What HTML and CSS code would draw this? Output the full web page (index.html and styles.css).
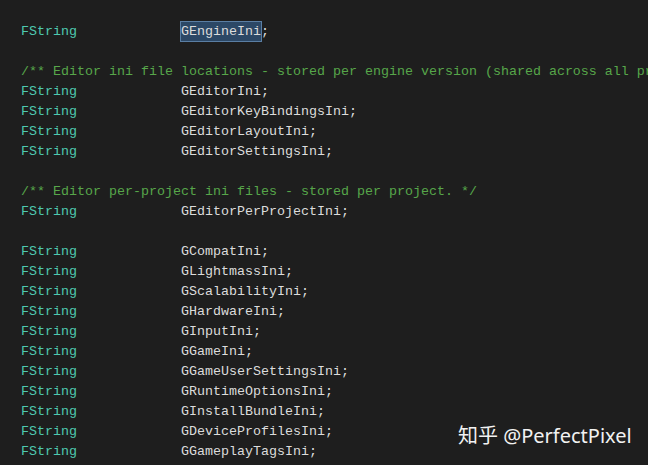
FILE: index.html
```html
<!DOCTYPE html>
<html>
<head>
<meta charset="utf-8">
<link rel="stylesheet" href="styles.css">
</head>
<body>
<div class="editor">
<div class="line"><span class="type">FString</span>             <span class="sel">GEngineIni</span>;</div>
<div class="line"> </div>
<div class="line cmt">/** Editor ini file locations - stored per engine version (shared across all pr</div>
<div class="line"><span class="type">FString</span>             GEditorIni;</div>
<div class="line"><span class="type">FString</span>             GEditorKeyBindingsIni;</div>
<div class="line"><span class="type">FString</span>             GEditorLayoutIni;</div>
<div class="line"><span class="type">FString</span>             GEditorSettingsIni;</div>
<div class="line"> </div>
<div class="line cmt">/** Editor per-project ini files - stored per project. */</div>
<div class="line"><span class="type">FString</span>             GEditorPerProjectIni;</div>
<div class="line"> </div>
<div class="line"><span class="type">FString</span>             GCompatIni;</div>
<div class="line"><span class="type">FString</span>             GLightmassIni;</div>
<div class="line"><span class="type">FString</span>             GScalabilityIni;</div>
<div class="line"><span class="type">FString</span>             GHardwareIni;</div>
<div class="line"><span class="type">FString</span>             GInputIni;</div>
<div class="line"><span class="type">FString</span>             GGameIni;</div>
<div class="line"><span class="type">FString</span>             GGameUserSettingsIni;</div>
<div class="line"><span class="type">FString</span>             GRuntimeOptionsIni;</div>
<div class="line"><span class="type">FString</span>             GInstallBundleIni;</div>
<div class="line"><span class="type">FString</span>             GDeviceProfilesIni;</div>
<div class="line"><span class="type">FString</span>             GGameplayTagsIni;</div>
</div>
<div class="watermark">知乎 @PerfectPixel</div>
</body>
</html>
```
FILE: styles.css
```css
html, body {
  margin: 0;
  padding: 0;
  background: #1e1e1e;
  width: 648px;
  height: 465px;
  overflow: hidden;
}
.editor {
  padding: 22px 0 0 21px;
  font-family: "Liberation Mono", monospace;
  font-size: 13.33px;
  color: #dcdcdc;
}
.line {
  height: 20px;
  line-height: 20px;
  white-space: pre;
}
.type { color: #4ec9b0; }
.cmt { color: #57a64a; }
.sel {
  background: #2c4866;
  outline: 1px solid #5a7ea3;
  outline-offset: 0;
  padding: 2px 0;
}
.watermark {
  position: absolute;
  left: 458px;
  top: 423px;
  font-family: "Noto Sans", "Noto Sans CJK SC", sans-serif;
  font-size: 20px;
  color: #f2f2f2;
  line-height: 26px;
}
```
